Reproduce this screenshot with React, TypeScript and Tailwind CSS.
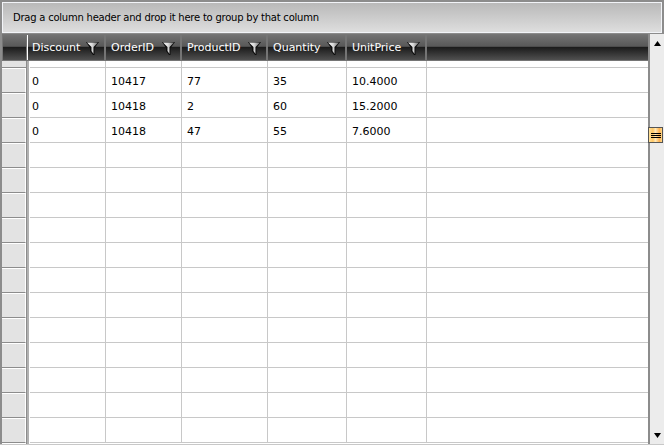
import React from 'react';

const columns = [
  { name: 'Discount', head: 'w-[78px] pl-[4px]', cell: 'w-[76px] pl-[2px]' },
  { name: 'OrderID', head: 'w-[76px] pl-[5px]', cell: 'w-[76px] pl-[5px]' },
  { name: 'ProductID', head: 'w-[86px] pl-[5px]', cell: 'w-[86px] pl-[5px]' },
  { name: 'Quantity', head: 'w-[79px] pl-[5px]', cell: 'w-[79px] pl-[5px]' },
  { name: 'UnitPrice', head: 'w-[80px] pl-[5px]', cell: 'w-[80px] pl-[5px]' },
];

const rows = [
  ['0', '10417', '77', '35', '10.4000'],
  ['0', '10418', '2', '60', '15.2000'],
  ['0', '10418', '47', '55', '7.6000'],
  ...Array.from({ length: 12 }, () => ['', '', '', '', '']),
];

const Funnel = () => (
  <svg width="13" height="13" viewBox="0 0 13 13" className="shrink-0">
    <defs>
      <linearGradient id="fn" x1="0" y1="0" x2="1" y2="0">
        <stop offset="0" stopColor="#f4f4f4" />
        <stop offset="0.45" stopColor="#dcdcdc" />
        <stop offset="1" stopColor="#6a6a6a" />
      </linearGradient>
    </defs>
    <path d="M0 0 H13 L8.5 6 V13 H7 L4 9 V6 Z" fill="#0c0c0c" />
    <path d="M1 0.5 H12 L7.5 5 V12 L5.5 9 V5 Z" fill="url(#fn)" />
  </svg>
);

const App: React.FC = () => {
  return (
    <div className="w-[664px] h-[445px] flex flex-col overflow-hidden bg-white text-[11px] font-['DejaVu_Sans',sans-serif] text-black border-b border-[#c8c8c8]">
      {/* Group panel */}
      <div className="h-[34px] shrink-0 border-t-2 border-x-2 border-b border-[#8c8c8c] bg-[#8c8c8c]">
        <div className="h-full border border-[#f2f4f8] bg-gradient-to-b from-[#b9b9b9] to-[#dedede] flex items-center pl-[10px]">
          <span className="text-[10px] tracking-[-0.23px]">Drag a column header and drop it here to group by that column</span>
        </div>
      </div>

      <div className="flex-1 min-h-0 flex">
        {/* Grid */}
        <div className="flex-1 min-w-0 flex flex-col border-l-2 border-[#8c8c8c]">
          {/* Header */}
          <div className="h-[27px] shrink-0 flex bg-[#757575] border-y border-[#757575]">
            <div className="w-[25px] shrink-0 border-x border-[#757575] [background-image:linear-gradient(#727272,#585858_45%,#1c1c1c_50%,#505050)]" />
            <div className="w-[1px] shrink-0 bg-white" />
            {columns.map((c) => (
              <div
                key={c.name}
                className={`${c.head} shrink-0 flex items-center justify-between pr-[5px] pt-[2px] text-white border-r-2 border-[#757575] [background-image:linear-gradient(#727272,#585858_45%,#1c1c1c_50%,#505050)]`}
              >
                <span>{c.name}</span>
                <Funnel />
              </div>
            ))}
            <div className="flex-1 [background-image:linear-gradient(#727272,#585858_45%,#1c1c1c_50%,#505050)]" />
          </div>

          {/* Body */}
          <div className="flex-1 min-h-0 flex overflow-hidden">
            <div className="w-[25px] shrink-0 flex flex-col border-r border-[#8c8c8c]">
              <div className="h-[7px] shrink-0 bg-[#e3e3e3] border-b border-[#8c8c8c]" />
              {rows.map((_, i) => (
                <div key={i} className="h-[25px] shrink-0 bg-[#e3e3e3] border border-white border-b-[#8c8c8c] border-l-0" />
              ))}
            </div>
            <div className="w-[3px] shrink-0 bg-[#b0b0b0] border-r border-white" />
            <div className="flex-1 min-w-0 flex flex-col">
              <div className="h-[7px] shrink-0 flex border-b border-[#c8c8c8]">
                {columns.map((c) => (
                  <div key={c.name} className={`${c.cell} shrink-0 border-r border-[#c8c8c8]`} />
                ))}
              </div>
              {rows.map((r, i) => (
                <div key={i} className="h-[25px] shrink-0 flex border-b border-[#c8c8c8]">
                  {columns.map((c, j) => (
                    <div key={c.name} className={`${c.cell} shrink-0 flex items-center pr-1 pt-[4px] border-r border-[#c8c8c8]`}>
                      {r[j]}
                    </div>
                  ))}
                </div>
              ))}
            </div>
          </div>
        </div>

        {/* Scrollbar */}
        <div className="w-[16px] shrink-0 relative flex flex-col items-center justify-between bg-[#ececec] border-l-2 border-[#8c8c8c] pt-[7px] pb-[6px]">
          <svg width="7" height="5" viewBox="0 0 7 5"><path d="M3.5 0 L7 5 H0 Z" fill="#000" /></svg>
          <div className="absolute left-[-2px] top-[93px] w-[15px] h-[16px] border border-[#555555] bg-[linear-gradient(90deg,#ffe29a,#ffc766_30%,#ffe9b8_50%,#ffb14e_80%,#ffd98c)] flex flex-col items-center justify-center gap-[1px]">
            <div className="w-[10px] h-[1px] bg-black" />
            <div className="w-[10px] h-[1px] bg-black" />
            <div className="w-[10px] h-[1px] bg-black" />
          </div>
          <svg width="7" height="5" viewBox="0 0 7 5"><path d="M3.5 5 L7 0 H0 Z" fill="#000" /></svg>
        </div>
      </div>
    </div>
  );
};

export default App;
